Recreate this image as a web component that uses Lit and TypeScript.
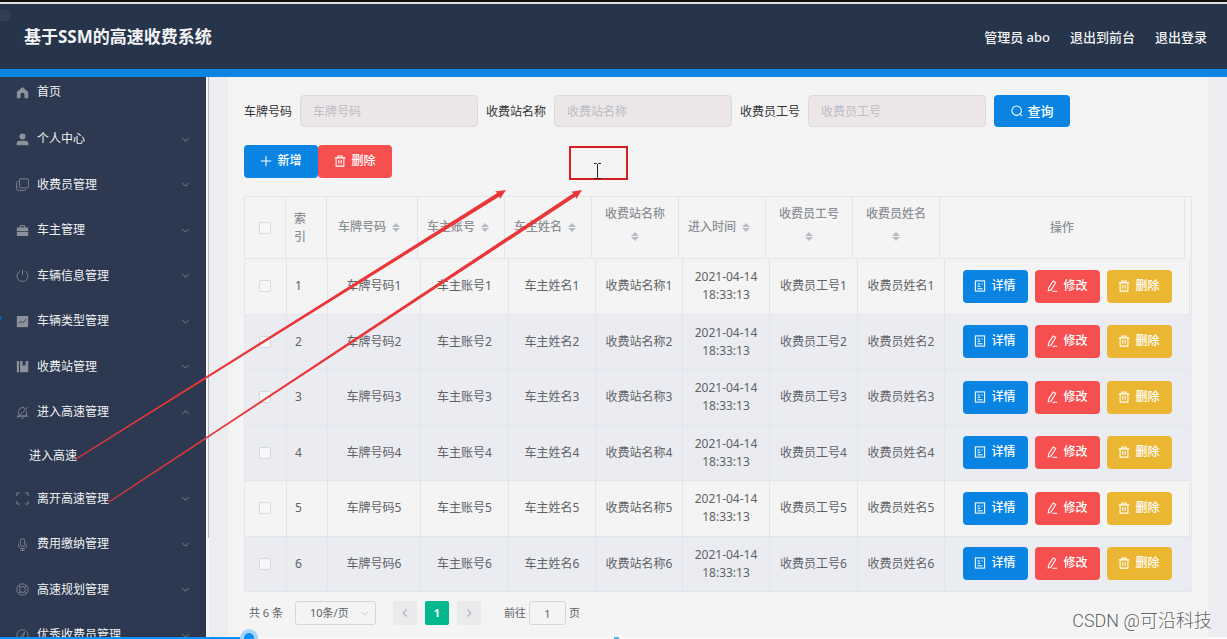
import { LitElement, html, svg, css } from "lit";
import { customElement } from "lit/decorators.js";
import { classMap } from "lit/directives/class-map.js";

const glyphs: Record<string, unknown> = {
  home: svg`<path class="fill" d="M8 1.2 1 7.4V15h4.6v-4.2a2.4 2.4 0 0 1 4.8 0V15H15V7.4z"/>`,
  user: svg`<circle class="fill" cx="8" cy="4.4" r="3.7"/><path class="fill" d="M.8 15v-2.2c0-2 1.6-3.4 3.6-3.4h7.2c2 0 3.6 1.4 3.6 3.4V15z"/>`,
  copy: svg`<rect x="4.3" y="1" width="11" height="11.2" rx="1.6"/><path d="M2.8 3.8C1.6 3.9.8 4.500.8 5.700v7.600C.8 14.500 1.600 15.200 2.700 15.200h7.500c1.200 0 2-.6 2.100-1.600"/>`,
  suitcase: svg`<path class="fill" d="M1 4.200h3.800V1.600h6.400v2.600H15v4.300H1zM6 4.200h4V2.800H6zM1 9.500h14v5.300H1z" fill-rule="evenodd"/>`,
  power: svg`<path d="M8 1v6.500M5 2.600a6.700 6.700 0 1 0 6 0"/>`,
  chart: svg`<rect class="fill" x="1" y="1.200" width="14" height="13.800"/><path class="cut" d="m3.200 10.600 3-3 2.300 2 4.200-4.600"/>`,
  book: svg`<path class="fill" d="M1 1.200h2.800V15H1zM5 1.200h3v6.300l1.900-1.500 1.900 1.500V1.200H15V15H5z"/>`,
  mute: svg`<path d="M12.700 6.200V12.400H3.500M3.300 11V6.600a4.700 4.700 0 0 1 8-3.300M8 1.800V.8M1 12.400h14M6.500 15h3M14.800 1 1.300 14.800"/>`,
  frame: svg`<path d="M1 5V1.200h4M11 1.200h4V5M15 11v3.800h-4M5 14.800H1V11"/>`,
  mic: svg`<rect x="5.300" y=".8" width="5.400" height="9.400" rx="2.700"/><path d="M3 7v1a5 5 0 0 0 10 0V7M8 13v2.200M5.300 15.200h5.400"/>`,
  help: svg`<circle cx="8" cy="8" r="7"/><circle cx="8" cy="8" r="3.700"/><path d="m3 3 2.500 2.500M13 3l-2.500 2.500M3 13l2.500-2.500M13 13l-2.500-2.500"/>`,
  compass: svg`<circle cx="8" cy="8" r="7"/><path d="M10.800 4.200 7 7.600a1.400 1.400 0 1 0 1.900 1.600z"/>`,
  down: svg`<path d="m2 5 6 6 6-6"/>`,
  up: svg`<path d="m2 11 6-6 6 6"/>`,
  left: svg`<path d="M10.500 2.500 5 8l5.500 5.500"/>`,
  right: svg`<path d="M5.500 2.500 11 8l-5.500 5.500"/>`,
  search: svg`<circle cx="7.500" cy="7.500" r="6.300"/><path d="m12 12 3 3"/>`,
  plus: svg`<path d="M8 1v14M1 8h14"/>`,
  trash: svg`<path d="M1 3.800h14M5.200 3.800V1.200h5.600v2.600M2.800 3.800v11h10.400v-11M6.400 6.800v5M9.600 6.800v5"/>`,
  doc: svg`<rect x="1.800" y="1.200" width="12.400" height="13.600"/><path d="M4.600 5.300h3.400M10 5.300h1.600M4.600 8.300h4M4.600 11.600h6.800"/>`,
  edit: svg`<path d="M9.600 1.300 12.900 3.200 7 13 3 14.700 3.500 10.600zM8.500 14.900H15"/>`,
};

const icon = (name: string) =>
  html`<svg class="icon" viewBox="0 0 16 16" aria-hidden="true">${glyphs[name]}</svg>`;

const menu = [
  { label: "个人中心", icon: "user" },
  { label: "收费员管理", icon: "copy" },
  { label: "车主管理", icon: "suitcase" },
  { label: "车辆信息管理", icon: "power" },
  { label: "车辆类型管理", icon: "chart" },
  { label: "收费站管理", icon: "book" },
  { label: "进入高速管理", icon: "mute", child: "进入高速" },
  { label: "离开高速管理", icon: "frame" },
  { label: "费用缴纳管理", icon: "mic" },
  { label: "高速规划管理", icon: "help" },
  { label: "优秀收费员管理", icon: "compass" },
];

const filters = [
  { id: "plate", label: "车牌号码" },
  { id: "station", label: "收费站名称" },
  { id: "staff", label: "收费员工号" },
];

const sortable = ["车牌号码", "车主账号", "车主姓名", "收费站名称", "进入时间", "收费员工号", "收费员姓名"];
const rows = [1, 2, 3, 4, 5, 6];

/* Tapered arrow from a thin tail to a wide head. */
const arrow = (x1: number, y1: number, x2: number, y2: number) => {
  const len = Math.hypot(x2 - x1, y2 - y1);
  const ux = (x2 - x1) / len;
  const uy = (y2 - y1) / len;
  const at = (d: number, side: number) =>
    `${(x1 + ux * d - uy * side).toFixed(1)},${(y1 + uy * d + ux * side).toFixed(1)}`;
  const points = [
    at(0, -0.5), at(len - 9, -2), at(len - 10, -4.5), at(len, 0),
    at(len - 10, 4.5), at(len - 9, 2), at(0, 0.5),
  ].join(" ");
  return svg`<polygon points=${points}></polygon>`;
};

@customElement("app-root")
export class AppRoot extends LitElement {
  static styles = css`
    :host {
      display: block;
      position: relative;
      height: 100vh;
      overflow: hidden;
      font: 12px/18px "Noto Sans", "Noto Sans CJK SC", sans-serif;
      color: #606266;
      background: #ecedf1;
    }
    * { box-sizing: border-box; }
    button, input, select { font: inherit; color: inherit; margin: 0; }
    a { color: inherit; text-decoration: none; }
    ul { list-style: none; margin: 0; padding: 0; }
    .icon {
      width: 12px; height: 12px; flex: none;
      fill: none; stroke: currentColor; stroke-width: 1.4;
    }
    .icon .fill { fill: currentColor; stroke: none; }
    .icon .cut { stroke: #2c3950; }

    .page { display: flex; flex-direction: column; height: 100%; }
    .top {
      display: flex; align-items: center; justify-content: space-between;
      height: 77px; flex: none; padding: 2px 20px 0 24px;
      color: #f2f3f5; background: #27354a;
      border-top: 2px solid #0f0f0f; border-bottom: 8px solid #0984e3;
      box-shadow: inset 0 2px #dfe0e2;
    }
    .brand { margin: 0; font-size: 17px; line-height: 24px; font-weight: 700; }
    .links { display: flex; gap: 20px; font-size: 13px; font-weight: 500; }
    .body { display: flex; flex: 1; min-height: 0; }

    .side {
      width: 206px; flex: none; overflow: hidden; padding-top: 1px;
      color: #f0f1f3; background: #2c3950;
    }
    .entry { display: flex; align-items: center; gap: 8px; height: 45px; padding: 0 16px; }
    .menu > li:nth-child(odd) > .entry { height: 46px; }
    .entry.first { height: 28px; margin-bottom: 10px; }
    .entry .icon { color: #8d9199; width: 13px; height: 13px; stroke-width: 1; }
    .entry .icon:last-child { width: 9px; height: 9px; margin-left: auto; stroke-width: 1.4; }
    .sub { display: flex; align-items: center; height: 41px; padding-left: 29px; }
    .track { width: 3px; flex: none; background: #f4f4f6; }
    .thumb { width: 100%; height: 82%; border-right: 1px solid #b3b4ba; }

    .main { flex: 1; min-width: 0; padding: 0 19px; }
    .panel { min-height: 100%; padding: 18px 16px; background: #f4f4f4; }
    .search { display: flex; align-items: center; gap: 8px; color: #333; }
    .search label { padding-top: 1px; }
    .search input {
      width: 178px; height: 32px; padding: 0 12px;
      border: 1px solid #d9dbe1; border-radius: 4px; background: #ece6e6; outline: 0;
    }
    .search input::placeholder { color: #b9bdc7; }
    .btn {
      display: inline-flex; align-items: center; justify-content: center; gap: 5px;
      height: 33px; width: 65px; padding: 0 0 1px;
      border: 0; border-radius: 4px; color: #fff; font-weight: 500;
    }
    .blue { background: #0984e3; }
    .red { background: #f54f50; }
    .gold { background: #ebb733; }
    .query { width: 76px; height: 32px; font-size: 13px; }
    .tools { display: flex; margin: 18px 0; }
    .tools .btn { width: 74px; }

    .grid { border: 1px solid #e6e7ee; border-bottom: 0; }
    table { width: 100%; table-layout: fixed; border-collapse: separate; border-spacing: 0; }
    th, td {
      padding: 0 8px; text-align: center; vertical-align: middle; font-weight: 400;
      border-right: 1px solid #e3e5ec; border-bottom: 1px solid #e3e5ec;
    }
    .head { padding-right: 6px; }
    .head table { height: 62px; }
    .head th { color: #8c8f95; font-weight: 500; }
    .rows { padding-right: 1px; }
    .rows table { height: 333px; }
    .rows td { padding: 0 4px; }
    .rows td:first-child { padding: 0 6px 0 4px; }
    .tint { background: #ebecf2; }
    .c-check { width: 41px; }
    .c-index { width: 41px; }
    .c-plate { width: 91px; }
    .c-mid { width: 87px; }
    .rows .c-check { width: 42px; }
    .rows .c-plate { width: 93px; }
    .rows .c-mid:nth-child(4n) { width: 88px; }
    th.idx, .rows td.idx { text-align: left; padding: 0 18px 0 8px; }
    .caret {
      display: inline-flex; flex-direction: column; align-items: center; justify-content: center;
      gap: 1px; width: 20px; height: 28px; vertical-align: middle;
    }
    .caret::before, .caret::after { content: ""; border: 4px solid transparent; }
    .caret::before { border-top: 0; border-bottom-color: #b9bcc5; }
    .caret::after { border-bottom: 0; border-top-color: #b9bcc5; }
    .box {
      appearance: none; display: block; width: 12px; height: 12px; margin: 0 auto;
      border: 1px solid #d8dae1; border-radius: 2px; background: #f7f7f8;
    }
    .acts { display: flex; justify-content: center; gap: 7px; }

    .pager { display: flex; align-items: center; margin-top: 9px; padding-left: 5px; font-size: 11px; }
    .size { position: relative; margin: 0 17px 0 12px; }
    .size select {
      appearance: none; display: block; width: 81px; height: 24px; padding: 0 14px;
      border: 1px solid #d5d7dd; border-radius: 3px; background: none;
    }
    .size .icon { position: absolute; right: 7px; top: 8px; width: 9px; height: 9px; color: #b6b9c1; }
    .pages { display: flex; gap: 8px; }
    .pages button {
      display: flex; align-items: center; justify-content: center; width: 24px; height: 24px;
      padding: 0; border: 0; border-radius: 2px; color: #b5b8be; background: #eaeaed;
    }
    .pages .icon { width: 10px; height: 10px; stroke-width: 2; }
    .pages .on { color: #fff; background: #00b88b; font-weight: 700; }
    .jump { display: flex; align-items: center; gap: 3px; margin-left: 23px; }
    .jump input {
      width: 37px; height: 24px; padding: 0; text-align: center;
      border: 1px solid #d5d7dd; border-radius: 3px; background: none;
    }

    .marks { position: absolute; left: 0; top: 0; pointer-events: none; fill: #e93638; }
    .outline { fill: none; stroke: #d81e20; stroke-width: 2; }
    .beam { fill: none; stroke: #222; stroke-width: 1; }
    .credit {
      position: absolute; right: 15px; bottom: 6px; line-height: 24px; font-size: 18px;
      font-family: Roboto, "Noto Sans CJK SC", sans-serif; font-weight: 300;
      color: #626365; text-shadow: 1px 1px #fff;
    }
    .seek {
      position: absolute; left: 0; right: 0; bottom: 0; height: 2px; background: #fafafa;
    }
    .played { position: relative; width: 249px; height: 2px; background: #0a91fb; }
    .knob {
      position: absolute; right: -9px; top: -8px; width: 18px; height: 18px;
      border: 4px solid #a9d5f7; border-radius: 50%; background: #0a91fb;
    }
    .tick { position: absolute; left: 50%; top: 0; width: 5px; height: 2px; background: #4cb6f0; }
    .chip {
      position: absolute; left: 0; top: 10px; width: 10px; height: 11px; background: #2f4052;
    }
    .dot {
      position: absolute; left: -2px; top: 316px; width: 4px; height: 4px;
      border-radius: 50%; background: #0a66ad;
    }
  `;

  private renderSide() {
    return html`<nav class="side" aria-label="菜单">
      <a class="entry first" href="#">${icon("home")}<span>首页</span></a>
      <ul class="menu">
        ${menu.map((m) => html`<li>
          <a class="entry" href="#">${icon(m.icon)}<span>${m.label}</span>${icon(m.child ? "up" : "down")}</a>
          ${m.child ? html`<a class="sub" href="#">${m.child}</a>` : ""}
        </li>`)}
      </ul>
    </nav>`;
  }

  private renderCols() {
    return html`<colgroup>
      <col class="c-check"><col class="c-index"><col class="c-plate">
      ${sortable.slice(1).map(() => html`<col class="c-mid">`)}<col>
    </colgroup>`;
  }

  private renderTable() {
    return html`<div class="grid">
      <div class="head"><table>
        ${this.renderCols()}
        <thead><tr>
          <th><input class="box" type="checkbox" aria-label="全选"></th>
          <th class="idx">索引</th>
          ${sortable.map((s) => html`<th>${s}<span class="caret"></span></th>`)}
          <th>操作</th>
        </tr></thead>
      </table></div>
      <div class="rows"><table>
        ${this.renderCols()}
        <tbody>
          ${rows.map((n) => html`<tr class=${classMap({ tint: n % 2 === 0 || n === 3 })}>
            <td><input class="box" type="checkbox" aria-label="选择第${n}行"></td>
            <td class="idx">${n}</td>
            <td>车牌号码${n}</td><td>车主账号${n}</td><td>车主姓名${n}</td><td>收费站名称${n}</td>
            <td>2021-04-14<br>18:33:13</td>
            <td>收费员工号${n}</td><td>收费员姓名${n}</td>
            <td><div class="acts">
              <button class="btn blue">${icon("doc")}详情</button>
              <button class="btn red">${icon("edit")}修改</button>
              <button class="btn gold">${icon("trash")}删除</button>
            </div></td>
          </tr>`)}
        </tbody>
      </table></div>
    </div>`;
  }

  private renderPager() {
    return html`<div class="pager">
      <span>共 6 条</span>
      <div class="size">
        <select aria-label="每页条数"><option>10条/页</option></select>${icon("down")}
      </div>
      <div class="pages">
        <button aria-label="上一页">${icon("left")}</button>
        <button class="on">1</button>
        <button aria-label="下一页">${icon("right")}</button>
      </div>
      <div class="jump">
        <label for="jump">前往</label><input id="jump" .value=${"1"}><span>页</span>
      </div>
    </div>`;
  }

  render() {
    return html`
      <div class="page">
        <header class="top">
          <h1 class="brand">基于SSM的高速收费系统</h1>
          <div class="links">
            <span>管理员 abo</span><a href="#">退出到前台</a><a href="#">退出登录</a>
          </div>
        </header>
        <div class="body">
          ${this.renderSide()}
          <div class="track"><div class="thumb"></div></div>
          <main class="main"><div class="panel">
            <form class="search">
              ${filters.map((f) => html`<label for=${f.id}>${f.label}</label><input id=${f.id} placeholder=${f.label}>`)}
              <button class="btn blue query" type="button">${icon("search")}查询</button>
            </form>
            <div class="tools">
              <button class="btn blue">${icon("plus")}新增</button>
              <button class="btn red">${icon("trash")}删除</button>
            </div>
            ${this.renderTable()}
            ${this.renderPager()}
          </div></main>
        </div>
      </div>
      <span class="chip"></span><span class="dot"></span>
      <div class="credit">CSDN @可沿科技</div>
      <div class="seek"><div class="played"><span class="knob"></span></div><span class="tick"></span></div>
      <svg class="marks" width="640" height="520" aria-hidden="true">
        ${arrow(76, 459, 506, 190)}
        ${arrow(109, 502, 582, 190)}
        <rect class="outline" x="570" y="147" width="57" height="32"></rect>
        <path class="beam" d="M594 163.500h2.500l1 1 1-1h2.500M597.500 164.500v13M594 178.500h2.500l1-1 1 1h2.500"></path>
      </svg>
    `;
  }
}
